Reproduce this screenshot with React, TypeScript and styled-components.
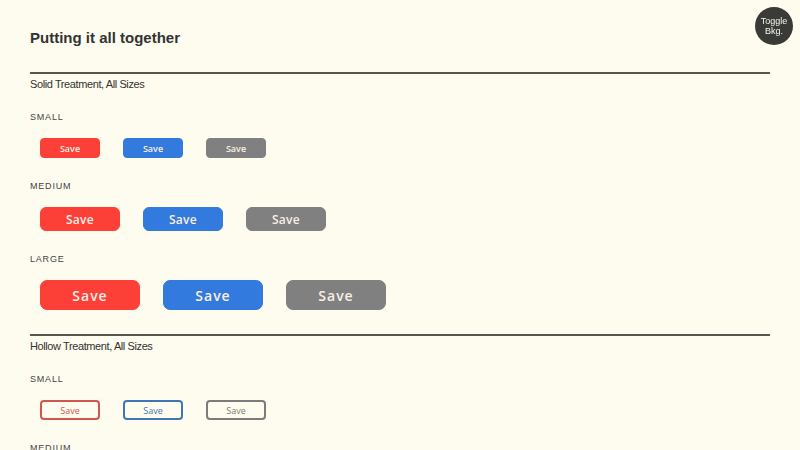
import React from 'react';
import styled, { createGlobalStyle } from 'styled-components';

const GlobalStyle = createGlobalStyle`
	html, body {
		margin: 0;
		padding: 0;
		background: #fefcef;
	}
	body {
		font-family: 'Liberation Sans', Arial, sans-serif;
		color: #333;
	}
`;

type Size = 'small' | 'medium' | 'large';
type Tone = 'red' | 'blue' | 'gray';

const solidColors: Record<Tone, string> = {
	red: '#fd4037',
	blue: '#337ade',
	gray: '#808080',
};

const hollowColors: Record<Tone, string> = {
	red: '#cf5750',
	blue: '#4275b4',
	gray: '#7c7c7c',
};

const sizes: Record<Size, { w: number; h: number; font: number; radius: number; spacing: number }> = {
	small: { w: 60, h: 20, font: 9, radius: 4, spacing: 0 },
	medium: { w: 80, h: 24, font: 12, radius: 6, spacing: 0.3 },
	large: { w: 100, h: 30, font: 14, radius: 7, spacing: 1 },
};

const Page = styled.main`
	padding: 28px 30px 40px;
	width: 740px;
`;

const Title = styled.h1`
	margin: 0 0 24px;
	font-size: 15px;
	line-height: 20px;
	font-weight: bold;
	color: #333;
`;

const Section = styled.section`
	border-top: 2px solid #555550;
	padding-top: 3px;
	padding-bottom: 2px;
`;

const SectionTitle = styled.div`
	font-size: 11px;
	letter-spacing: -0.4px;
	line-height: 14px;
	color: #333;
	margin-bottom: 20px;
`;

const Group = styled.div`
	margin-bottom: 22px;
`;

const SizeLabel = styled.div`
	font-size: 9px;
	line-height: 12px;
	letter-spacing: 0.8px;
	color: #444;
	margin-bottom: 15px;
`;

const Row = styled.div`
	display: flex;
	gap: 23px;
	padding-left: 10px;
`;

const Button = styled.button<{ size: Size; tone: Tone; hollow?: boolean }>`
	box-sizing: border-box;
	width: ${({ size }) => sizes[size].w}px;
	height: ${({ size }) => sizes[size].h}px;
	border-radius: ${({ size }) => sizes[size].radius}px;
	font-family: 'Open Sans', 'Noto Sans', sans-serif;
	font-size: ${({ size }) => sizes[size].font}px;
	letter-spacing: ${({ size }) => sizes[size].spacing}px;
	padding: 0;
	cursor: pointer;
	background: ${({ tone, hollow }) => (hollow ? 'transparent' : solidColors[tone])};
	color: ${({ tone, hollow }) => (hollow ? hollowColors[tone] : '#fbeee6')};
	border: ${({ tone, hollow }) => (hollow ? `2px solid ${hollowColors[tone]}` : `1px solid ${solidColors[tone]}`)};
	font-weight: ${({ hollow }) => (hollow ? 400 : 600)};
`;

const ToggleButton = styled.button`
	position: fixed;
	top: 7px;
	right: 7px;
	width: 38px;
	height: 38px;
	border-radius: 50%;
	border: none;
	background: #3a3a37;
	color: #f4f4f0;
	font-family: 'Liberation Sans', Arial, sans-serif;
	font-size: 9px;
	line-height: 10px;
	padding: 0;
	cursor: pointer;
`;

const tones: Tone[] = ['red', 'blue', 'gray'];
const sizeList: { key: Size; label: string }[] = [
	{ key: 'small', label: 'SMALL' },
	{ key: 'medium', label: 'MEDIUM' },
	{ key: 'large', label: 'LARGE' },
];

const Treatment: React.FC<{ title: string; hollow?: boolean }> = ({ title, hollow }) => (
	<Section>
		<SectionTitle>{title}</SectionTitle>
		{sizeList.map((s) => (
			<Group key={s.key}>
				<SizeLabel>{s.label}</SizeLabel>
				<Row>
					{tones.map((t) => (
						<Button key={t} size={s.key} tone={t} hollow={hollow}>
							Save
						</Button>
					))}
				</Row>
			</Group>
		))}
	</Section>
);

export default function App() {
	return (
		<>
			<GlobalStyle />
			<Page>
				<Title>Putting it all together</Title>
				<Treatment title="Solid Treatment, All Sizes" />
				<Treatment title="Hollow Treatment, All Sizes" hollow />
			</Page>
			<ToggleButton>
				Toggle
				<br />
				Bkg.
			</ToggleButton>
		</>
	);
}
